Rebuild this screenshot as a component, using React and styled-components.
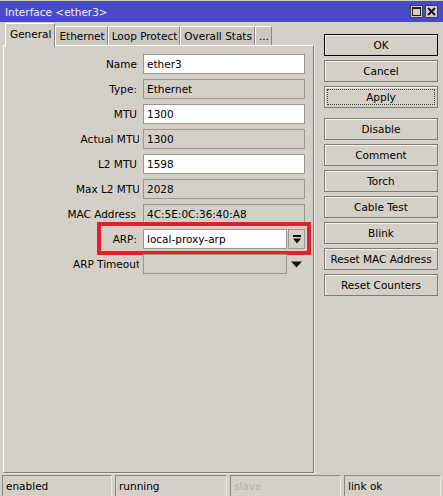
import React from "react";
import styled, { createGlobalStyle, css } from "styled-components";

const GlobalStyle = createGlobalStyle`
  html, body {
    margin: 0;
    padding: 0;
    background: #d4d0c8;
  }
  body {
    font-family: "DejaVu Sans", "Liberation Sans", sans-serif;
    font-size: 10.5px;
    color: #000;
  }
`;

const Window = styled.div`
  width: 443px;
  height: 496px;
  display: flex;
  flex-direction: column;
  background: #d4d0c8;
  overflow: hidden;
`;

const TitleBar = styled.div`
  height: 21px;
  margin-top: 1px;
  background: #4a4ac9;
  display: flex;
  align-items: center;
  justify-content: space-between;
  padding: 0 5px 0 5px;
  color: #eeeef6;
  flex-shrink: 0;
`;

const TitleText = styled.span`
  letter-spacing: 0;
`;

const TitleButtons = styled.div`
  display: flex;
  gap: 2px;
`;

const TitleButton = styled.div`
  width: 13px;
  height: 13px;
  background: #d4d0c8;
  border: 1px solid #404040;
  box-sizing: border-box;
  display: flex;
  align-items: center;
  justify-content: center;
`;

const Body = styled.div`
  flex: 1;
  display: flex;
  min-height: 0;
`;

const LeftPane = styled.div`
  width: 311px;
  margin-left: 3px;
  padding-top: 1px;
  display: flex;
  flex-direction: column;
`;

const TabStrip = styled.div`
  height: 22px;
  display: flex;
  align-items: flex-end;
  padding-left: 2px;
  position: relative;
  z-index: 1;
`;

const Tab = styled.div`
  box-sizing: border-box;
  padding: 0 2px 0 3px;
  white-space: nowrap;
  display: flex;
  align-items: center;
  border-left: 1px solid #fff;
  border-top: 1px solid #fff;
  border-right: 1px solid #8a8680;
  ${(p) =>
    p.$active
      ? css`
          height: 24px;
          margin-bottom: -2px;
          background: #d4d0c8;
          padding: 0 3px 3px 4px;
        `
      : css`
          height: 19px;
          background: #ccc8c0;
        `}
`;

const Panel = styled.div`
  flex: 1;
  margin-bottom: 2px;
  box-sizing: border-box;
  border-top: 1px solid #fff;
  border-left: 1px solid #fff;
  border-right: 1px solid #7d7a74;
  border-bottom: 1px solid #7d7a74;
  box-shadow: 1px 1px 0 #ece9e4;
  padding: 8px 7px 0 8px;
  display: flex;
  flex-direction: column;
  gap: 5px;
`;

const Row = styled.div`
  display: grid;
  grid-template-columns: 127px 162px;
  column-gap: 4px;
  height: 20px;
  align-items: center;
  position: relative;
  ${(p) =>
    p.$highlight &&
    css`
      &::after {
        content: "";
        position: absolute;
        left: 85px;
        top: -7px;
        right: -5px;
        bottom: -6px;
        border: 4px solid #e2202a;
        pointer-events: none;
      }
    `}
`;

const LabelCell = styled.div`
  display: flex;
  justify-content: flex-end;
  overflow: hidden;
  white-space: nowrap;
`;

const LabelText = styled.span`
  flex-shrink: 0;
  margin-right: ${(p) => 2 - (p.$shift || 0)}px;
`;

const FieldLine = styled.div`
  display: flex;
  height: 20px;
  align-items: stretch;
`;

const Field = styled.div`
  flex: 1;
  box-sizing: border-box;
  height: 20px;
  border: 1px solid #9a9690;
  background: ${(p) => (p.$readOnly ? "#d4d0c8" : "#fff")};
  padding: 0 3px;
  display: flex;
  align-items: center;
  white-space: nowrap;
  overflow: hidden;
`;

const DropButton = styled.div`
  width: 17px;
  margin-left: 1px;
  box-sizing: border-box;
  display: flex;
  align-items: center;
  justify-content: center;
  ${(p) =>
    p.$framed &&
    css`
      border: 1px solid #9a9690;
      background: #d4d0c8;
    `}
`;

const ButtonColumn = styled.div`
  width: 114px;
  margin-left: 10px;
  padding-top: 12px;
  display: flex;
  flex-direction: column;
  gap: 4px;
`;

const Button = styled.div`
  height: 22px;
  box-sizing: border-box;
  display: flex;
  align-items: center;
  justify-content: center;
  white-space: nowrap;
  background: #d4d0c8;
  border: 1px solid ${(p) => (p.$default ? "#000" : "#7f7c76")};
  box-shadow: inset 1px 1px 0 #f4f2ee;
  position: relative;
  ${(p) =>
    p.$spaced &&
    css`
      margin-top: 6px;
    `}
  ${(p) =>
    p.$focused &&
    css`
      &::after {
        content: "";
        position: absolute;
        inset: 2px;
        border: 1px dotted #404040;
      }
    `}
`;

const StatusBar = styled.div`
  height: 21px;
  flex-shrink: 0;
  display: grid;
  grid-template-columns: 110px 112px 111px 97px;
  column-gap: 3px;
  padding-left: 2px;
`;

const StatusCell = styled.div`
  box-sizing: border-box;
  border-top: 1px solid #8c8880;
  border-left: 1px solid #8c8880;
  border-right: 1px solid #eeebe6;
  padding: 0 3px;
  display: flex;
  align-items: center;
  color: ${(p) => (p.$dim ? "#b4b0aa" : "#000")};
`;

const MaximizeIcon = () => (
  <svg width="9" height="9" viewBox="0 0 9 9">
    <rect x="0.5" y="0.5" width="8" height="8" fill="none" stroke="#202020" />
    <rect x="0" y="0" width="9" height="2" fill="#202020" />
  </svg>
);

const CloseIcon = () => (
  <svg width="9" height="9" viewBox="0 0 9 9">
    <path d="M1 1 L8 8 M8 1 L1 8" stroke="#111" strokeWidth="2" />
  </svg>
);

const DropToIcon = () => (
  <svg width="8" height="9" viewBox="0 0 8 9">
    <rect x="0" y="0" width="8" height="2" fill="#111" />
    <path d="M0 3.5 H8 L4 8.5 Z" fill="#111" />
  </svg>
);

const ArrowIcon = () => (
  <svg width="11" height="7" viewBox="0 0 11 7">
    <path d="M0 0.5 H11 L5.5 6.5 Z" fill="#111" />
  </svg>
);

const tabs = ["General", "Ethernet", "Loop Protect", "Overall Stats", "..."];

const fields = [
  { label: "Name", value: "ether3" },
  { label: "Type:", value: "Ethernet", readOnly: true },
  { label: "MTU", value: "1300" },
  { label: "Actual MTU", value: "1300", readOnly: true, shift: 3 },
  { label: "L2 MTU", value: "1598" },
  { label: "Max L2 MTU", value: "2028", readOnly: true, shift: 3 },
  { label: "MAC Address", value: "4C:5E:0C:36:40:A8", readOnly: true, shift: -1 },
  { label: "ARP:", value: "local-proxy-arp", drop: "framed", highlight: true },
  { label: "ARP Timeout", value: "", readOnly: true, drop: "plain", shift: 3 },
];

const buttons = [
  { text: "OK", isDefault: true },
  { text: "Cancel" },
  { text: "Apply", focused: true },
  { text: "Disable", spaced: true },
  { text: "Comment" },
  { text: "Torch" },
  { text: "Cable Test" },
  { text: "Blink" },
  { text: "Reset MAC Address" },
  { text: "Reset Counters" },
];

const statuses = [
  { text: "enabled" },
  { text: "running" },
  { text: "slave", dim: true },
  { text: "link ok" },
];

export default function App() {
  return (
    <>
      <GlobalStyle />
      <Window>
        <TitleBar>
          <TitleText>Interface &lt;ether3&gt;</TitleText>
          <TitleButtons>
            <TitleButton>
              <MaximizeIcon />
            </TitleButton>
            <TitleButton>
              <CloseIcon />
            </TitleButton>
          </TitleButtons>
        </TitleBar>
        <Body>
          <LeftPane>
            <TabStrip>
              {tabs.map((t, i) => (
                <Tab key={t} $active={i === 0}>
                  {t}
                </Tab>
              ))}
            </TabStrip>
            <Panel>
              {fields.map((f) => (
                <Row key={f.label} $highlight={f.highlight}>
                  <LabelCell>
                    <LabelText $shift={f.shift}>{f.label}</LabelText>
                  </LabelCell>
                  <FieldLine>
                    <Field $readOnly={f.readOnly}>{f.value}</Field>
                    {f.drop && (
                      <DropButton $framed={f.drop === "framed"}>
                        {f.drop === "framed" ? <DropToIcon /> : <ArrowIcon />}
                      </DropButton>
                    )}
                  </FieldLine>
                </Row>
              ))}
            </Panel>
          </LeftPane>
          <ButtonColumn>
            {buttons.map((b) => (
              <Button
                key={b.text}
                $default={b.isDefault}
                $focused={b.focused}
                $spaced={b.spaced}
              >
                {b.text}
              </Button>
            ))}
          </ButtonColumn>
        </Body>
        <StatusBar>
          {statuses.map((s) => (
            <StatusCell key={s.text} $dim={s.dim}>
              {s.text}
            </StatusCell>
          ))}
        </StatusBar>
      </Window>
    </>
  );
}
